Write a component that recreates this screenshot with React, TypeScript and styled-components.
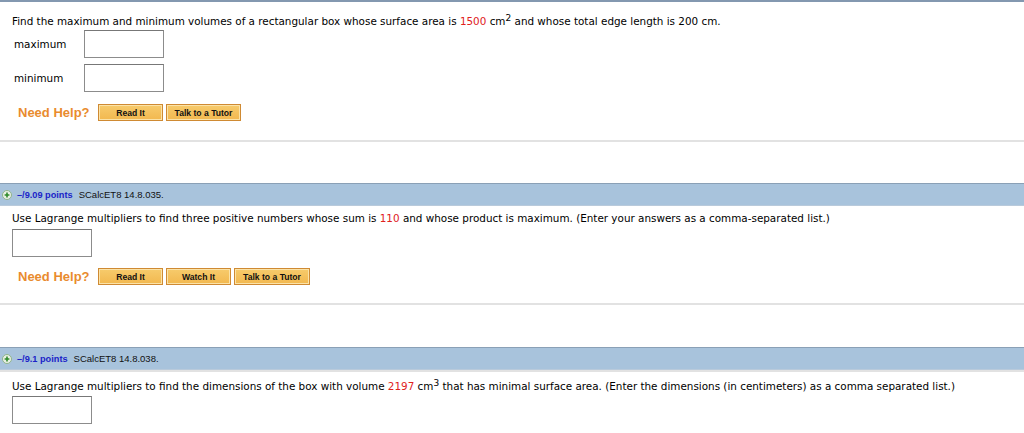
import React from "react";
import styled, { createGlobalStyle } from "styled-components";

const Global = createGlobalStyle`
  html, body { margin: 0; padding: 0; background: #fff; }
  body { font-family: "DejaVu Sans", Verdana, sans-serif; color: #000; }
`;

const Page = styled.div`
  border-top: 2px solid #8398b0;
  width: 1024px;
`;

const Question = styled.div<{ $pt: number }>`
  padding: ${(p) => p.$pt}px 0 0 12px;
`;

const Text = styled.div`
  font-size: 10.4px;
  line-height: 14px;
  white-space: nowrap;
`;

const Red = styled.span`
  color: #e0211d;
`;

const Sup = styled.sup`
  font-size: 9px;
  line-height: 0;
  vertical-align: 4px;
`;

const Field = styled.div<{ $mt: number }>`
  display: flex;
  align-items: center;
  margin-top: ${(p) => p.$mt}px;
`;

const Label = styled.span`
  box-sizing: border-box;
  width: 72px;
  padding-left: 2px;
  font-size: 10.4px;
`;

const Input = styled.div<{ $mt?: number }>`
  width: 78px;
  height: 26px;
  border: 1px solid #8c8c8c;
  border-top-color: #777;
  background: #fff;
  margin-top: ${(p) => p.$mt ?? 0}px;
`;

const HelpRow = styled.div<{ $mt: number }>`
  display: flex;
  align-items: center;
  gap: 3px;
  margin-top: ${(p) => p.$mt}px;
  padding-left: 18px;
`;

const HelpLabel = styled.span`
  font-family: "Liberation Sans", Arial, sans-serif;
  font-weight: bold;
  font-size: 13px;
  color: #e98b2e;
  width: 77px;
`;

const Button = styled.div<{ $w: number }>`
  width: ${(p) => p.$w}px;
  height: 17px;
  box-sizing: border-box;
  border: 1px solid #cf8a33;
  box-shadow: inset 0 0 0 1px #fbe3a8;
  background: linear-gradient(#f7cb6c, #f2b84f);
  display: flex;
  align-items: center;
  justify-content: center;
  font-family: "Liberation Sans", Arial, sans-serif;
  font-weight: bold;
  font-size: 8.6px;
  color: #111;
`;

const Divider = styled.div<{ $mt: number }>`
  margin-top: ${(p) => p.$mt}px;
  height: 2px;
  background: #e2e2e2;
`;

const Header = styled.div<{ $mt: number }>`
  margin-top: ${(p) => p.$mt}px;
  height: 23px;
  box-sizing: border-box;
  border-top: 1px solid #8aa0b6;
  border-bottom: 1px solid #b9cadb;
  background: #a8c3dc;
  display: flex;
  align-items: center;
  padding-left: 2px;
  font-family: "Liberation Sans", Arial, sans-serif;
  font-size: 9.5px;
`;

const Points = styled.span`
  color: #1b24c8;
  font-weight: bold;
  font-size: 9.2px;
  margin-left: 5px;
  margin-right: 6px;
`;

const Ref = styled.span`
  color: #111;
`;

const Plus = () => (
  <svg width="10" height="10" viewBox="0 0 10 10">
    <circle cx="5" cy="5" r="4.5" fill="#e8efe4" stroke="#8fb48a" strokeWidth="1" />
    <path d="M5 2.6v4.8M2.6 5h4.8" stroke="#2e8a2a" strokeWidth="1.6" />
  </svg>
);

export default function App() {
  return (
    <>
      <Global />
      <Page>
        <Question $pt={12}>
          <Text>
            Find the maximum and minimum volumes of a rectangular box whose surface area is{" "}
            <Red>1500</Red> cm<Sup>2</Sup> and whose total edge length is 200 cm.
          </Text>
          <Field $mt={2}>
            <Label>maximum</Label>
            <Input />
          </Field>
          <Field $mt={6}>
            <Label>minimum</Label>
            <Input />
          </Field>
        </Question>
        <HelpRow $mt={12}>
          <HelpLabel>Need Help?</HelpLabel>
          <Button $w={65}>Read It</Button>
          <Button $w={75}>Talk to a Tutor</Button>
        </HelpRow>
        <Divider $mt={19} />
        <Header $mt={41}>
          <Plus />
          <Points>–/9.09 points</Points>
          <Ref>SCalcET8 14.8.035.</Ref>
        </Header>
        <Question $pt={5}>
          <Text>
            Use Lagrange multipliers to find three positive numbers whose sum is <Red>110</Red> and
            whose product is maximum. (Enter your answers as a comma-separated list.)
          </Text>
          <Input $mt={4} />
        </Question>
        <HelpRow $mt={11}>
          <HelpLabel>Need Help?</HelpLabel>
          <Button $w={65}>Read It</Button>
          <Button $w={65}>Watch It</Button>
          <Button $w={76}>Talk to a Tutor</Button>
        </HelpRow>
        <Divider $mt={18} />
        <Header $mt={42}>
          <Plus />
          <Points>–/9.1 points</Points>
          <Ref>SCalcET8 14.8.038.</Ref>
        </Header>
        <Divider $mt={0} />
        <Question $pt={7}>
          <Text>
            Use Lagrange multipliers to find the dimensions of the box with volume <Red>2197</Red> cm
            <Sup>3</Sup> that has minimal surface area. (Enter the dimensions (in centimeters) as a
            comma separated list.)
          </Text>
          <Input $mt={3} />
        </Question>
      </Page>
    </>
  );
}
